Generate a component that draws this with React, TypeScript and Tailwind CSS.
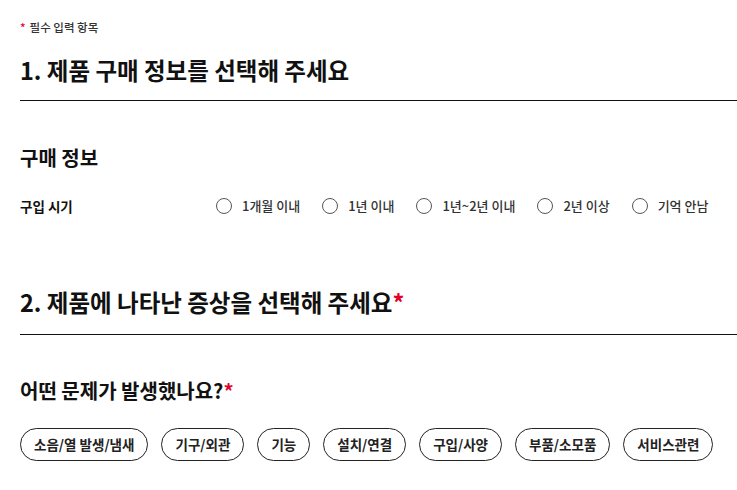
const PERIODS = ['1개월 이내', '1년 이내', '1년~2년 이내', '2년 이상', '기억 안남'];

const CATEGORIES = ['소음/열 발생/냄새', '기구/외관', '기능', '설치/연결', '구입/사양', '부품/소모품', '서비스관련'];

function Radio({ label }: { label: string }) {
  return (
    <label className="flex shrink-0 items-center gap-[10px] cursor-pointer">
      <span className="w-4 h-4 shrink-0 rounded-full border border-[#555] bg-white" />
      <span className="whitespace-nowrap text-[13px] leading-5 font-medium text-[#333]">{label}</span>
    </label>
  );
}

export default function App() {
  return (
    <main
      className="min-h-screen bg-white pl-5 pt-5 text-[#111]"
      style={{ fontFamily: '"Noto Sans CJK KR", "Noto Sans", sans-serif' }}
    >
      <p className="text-[11.5px] leading-[14px] font-medium text-[#333]">
        <span className="text-[#e4002b] mr-1">*</span>필수 입력 항목
      </p>

      <h1 className="mt-5 pb-[14px] border-b border-[#111] text-[23.5px] leading-8 font-bold">
        1. 제품 구매 정보를 선택해 주세요
      </h1>

      <section className="mt-11">
        <h2 className="text-[20px] leading-[26px] font-bold">구매 정보</h2>
        <div className="mt-[25px] flex items-center h-5">
          <span className="w-[196px] shrink-0 text-[13.5px] font-bold">구입 시기</span>
          <div className="flex items-center gap-[22px]">
            {PERIODS.map((p) => (
              <Radio key={p} label={p} />
            ))}
          </div>
        </div>
      </section>

      <h1 className="mt-[70px] pb-4 border-b border-[#111] text-[23.5px] leading-8 font-bold">
        2. 제품에 나타난 증상을 선택해 주세요<span className="text-[#e4002b]">*</span>
      </h1>

      <section className="mt-[42px]">
        <h2 className="text-[20px] leading-7 font-bold">
          어떤 문제가 발생했나요?<span className="text-[#e4002b]">*</span>
        </h2>
        <div className="mt-[23px] flex flex-wrap gap-[13px]">
          {CATEGORIES.map((c) => (
            <button
              key={c}
              className="h-[33px] px-[13px] rounded-full border border-[#222] bg-white text-[13.5px] font-bold text-[#222]"
            >
              {c}
            </button>
          ))}
        </div>
      </section>
    </main>
  );
}
